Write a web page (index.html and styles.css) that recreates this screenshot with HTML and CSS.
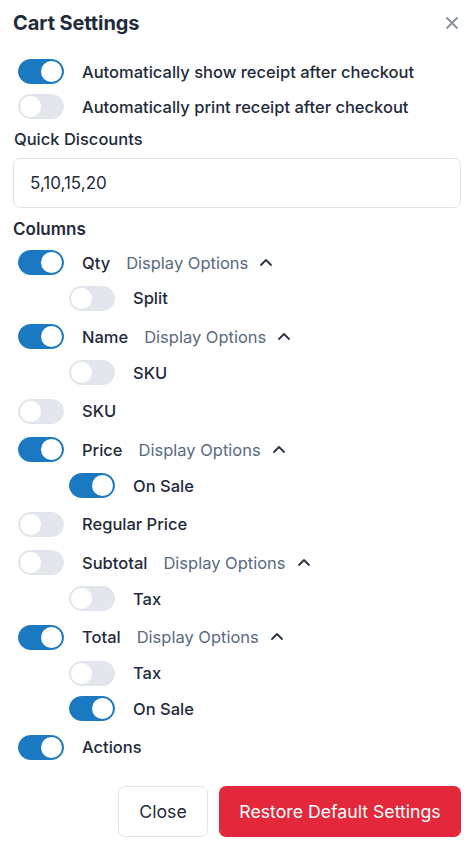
FILE: index.html
```html
<!DOCTYPE html>
<html>
<head>
<meta charset="utf-8">
<link rel="stylesheet" href="styles.css">
</head>
<body>
<div class="modal">
  <div class="header">
    <h1 class="title">Cart Settings</h1>
    <button class="close-x" aria-label="Close">
      <svg width="14" height="14" viewBox="0 0 14 14"><path d="M2 2 L12 12 M12 2 L2 12" stroke="#8a929c" stroke-width="2" stroke-linecap="round"/></svg>
    </button>
  </div>

  <div class="settings">
    <div class="row"><span class="toggle on"></span><span class="label">Automatically show receipt after checkout</span></div>
    <div class="row"><span class="toggle"></span><span class="label">Automatically print receipt after checkout</span></div>
  </div>

  <div class="field-label">Quick Discounts</div>
  <div class="input">5,10,15,20</div>

  <div class="section-label">Columns</div>

  <div class="columns">
    <div class="item">
      <div class="row"><span class="toggle on"></span><span class="label">Qty</span><span class="opts">Display Options</span><svg class="chev" width="14" height="10" viewBox="0 0 14 10"><path d="M2 8 L7 3 L12 8" fill="none" stroke="#2a3440" stroke-width="1.8" stroke-linecap="round" stroke-linejoin="round"/></svg></div>
      <div class="row sub"><span class="toggle"></span><span class="label">Split</span></div>
    </div>
    <div class="item">
      <div class="row"><span class="toggle on"></span><span class="label">Name</span><span class="opts">Display Options</span><svg class="chev" width="14" height="10" viewBox="0 0 14 10"><path d="M2 8 L7 3 L12 8" fill="none" stroke="#2a3440" stroke-width="1.8" stroke-linecap="round" stroke-linejoin="round"/></svg></div>
      <div class="row sub"><span class="toggle"></span><span class="label">SKU</span></div>
    </div>
    <div class="item">
      <div class="row"><span class="toggle"></span><span class="label">SKU</span></div>
    </div>
    <div class="item">
      <div class="row"><span class="toggle on"></span><span class="label">Price</span><span class="opts">Display Options</span><svg class="chev" width="14" height="10" viewBox="0 0 14 10"><path d="M2 8 L7 3 L12 8" fill="none" stroke="#2a3440" stroke-width="1.8" stroke-linecap="round" stroke-linejoin="round"/></svg></div>
      <div class="row sub"><span class="toggle on"></span><span class="label">On Sale</span></div>
    </div>
    <div class="item">
      <div class="row"><span class="toggle"></span><span class="label">Regular Price</span></div>
    </div>
    <div class="item">
      <div class="row"><span class="toggle"></span><span class="label">Subtotal</span><span class="opts">Display Options</span><svg class="chev" width="14" height="10" viewBox="0 0 14 10"><path d="M2 8 L7 3 L12 8" fill="none" stroke="#2a3440" stroke-width="1.8" stroke-linecap="round" stroke-linejoin="round"/></svg></div>
      <div class="row sub"><span class="toggle"></span><span class="label">Tax</span></div>
    </div>
    <div class="item">
      <div class="row"><span class="toggle on"></span><span class="label">Total</span><span class="opts">Display Options</span><svg class="chev" width="14" height="10" viewBox="0 0 14 10"><path d="M2 8 L7 3 L12 8" fill="none" stroke="#2a3440" stroke-width="1.8" stroke-linecap="round" stroke-linejoin="round"/></svg></div>
      <div class="row sub"><span class="toggle"></span><span class="label">Tax</span></div>
      <div class="row sub"><span class="toggle on"></span><span class="label">On Sale</span></div>
    </div>
    <div class="item">
      <div class="row"><span class="toggle on"></span><span class="label">Actions</span></div>
    </div>
  </div>

  <div class="footer">
    <button class="btn btn-light">Close</button>
    <button class="btn btn-danger">Restore Default Settings</button>
  </div>
</div>
</body>
</html>
```
FILE: styles.css
```css
* { box-sizing: border-box; }
html, body { margin: 0; padding: 0; background: #fff; }
body {
  font-family: "Inter", "Noto Sans", sans-serif;
  color: #1f2b3a;
  font-size: 16.5px;
}
.modal { padding: 10px 13px 0 13px; }
.header { display: flex; justify-content: space-between; align-items: center; height: 26px; }
.title { margin: 0; font-size: 20px; font-weight: 700; color: #1f2b3a; letter-spacing: -0.1px; }
.close-x { background: none; border: 0; padding: 0; margin-right: 2px; display: flex; }
.settings { margin-top: 23px; display: flex; flex-direction: column; gap: 10px; }
.row { display: flex; align-items: center; height: 25px; }
.toggle {
  position: relative;
  width: 46px; height: 25px; border-radius: 13px;
  background: #e3e7ed; border: 1px solid #e1e5eb;
  margin-left: 5px; flex-shrink: 0;
}
.toggle::after {
  content: ""; position: absolute; top: 1px; left: 1px;
  width: 21px; height: 21px; border-radius: 50%; background: #fff;
}
.toggle.on { background: #1b79c2; border-color: #1b79c2; }
.toggle.on::after { left: 22px; }
.label { margin-left: 18px; font-weight: 450; font-size: 16.5px; color: #1f2b3a; }
.opts { margin-left: 16px; color: #5a6a7f; font-size: 16.5px; font-weight: 400; }
.chev { margin-left: 11px; margin-top: -2px; }
.field-label { margin-top: 8px; font-weight: 450; font-size: 16.5px; height: 24px; line-height: 24px; margin-left: 1px; }
.input {
  margin-top: 7px; height: 50px; border: 1px solid #dfe3e8; border-radius: 7px;
  padding: 0 16px; display: flex; align-items: center; font-size: 17px; color: #1f2b3a;
}
.section-label { margin-top: 9px; font-weight: 600; font-size: 17px; height: 24px; line-height: 24px; }
.columns { margin-top: 9px; display: flex; flex-direction: column; gap: 13.6px; }
.item { display: flex; flex-direction: column; gap: 10.8px; }
.row.sub { padding-left: 51px; }
.footer { display: flex; justify-content: flex-end; gap: 11px; margin-top: 26px; }
.btn {
  height: 51px; border-radius: 7px; font-family: inherit; font-size: 17.7px; padding: 0;
  border: 1px solid transparent; white-space: nowrap;
}
.btn-light { background: #fff; border-color: #e1e5ea; color: #1f2b3a; width: 90px; }
.btn-danger { background: #e3283b; color: #fff; width: 242px; }
```
